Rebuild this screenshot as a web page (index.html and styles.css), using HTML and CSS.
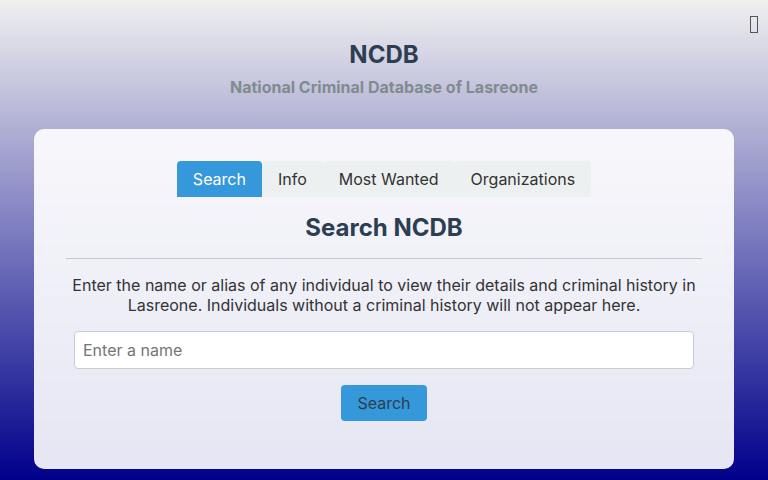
FILE: index.html
```html
<!DOCTYPE html>
<html lang="en">
<head>
<meta charset="utf-8">
<title>NCDB</title>
<link rel="stylesheet" href="styles.css">
</head>
<body>
<button class="theme-toggle" aria-label="Toggle theme"><span class="tofu"></span></button>
<header class="header">
  <h1 class="title">NCDB</h1>
  <p class="subtitle">National Criminal Database of Lasreone</p>
</header>
<main class="card">
  <nav class="tabs">
    <button class="tab tab-active">Search</button>
    <button class="tab">Info</button>
    <button class="tab">Most Wanted</button>
    <button class="tab">Organizations</button>
  </nav>
  <h2 class="heading">Search NCDB</h2>
  <hr class="divider">
  <p class="intro">Enter the name or alias of any individual to view their details and criminal history in Lasreone. Individuals without a criminal history will not appear here.</p>
  <div class="search-row">
    <input class="search-input" type="text" placeholder="Enter a name">
  </div>
  <div class="button-row">
    <button class="search-button">Search</button>
  </div>
</main>
</body>
</html>
```

FILE: styles.css
```css
* { box-sizing: border-box; }
html, body { height: 100%; }
body {
  margin: 0;
  font-family: Inter, "Noto Sans", sans-serif;
  background: linear-gradient(to bottom, #f0f0f0, #00008b);
  color: #333;
  overflow: hidden;
}
.theme-toggle {
  position: absolute;
  top: 14px;
  right: 8px;
  background: none;
  border: none;
  padding: 2px 2px;
  cursor: pointer;
}
.tofu {
  display: block;
  width: 8px;
  height: 17px;
  border: 1.5px solid #555;
}
.header {
  padding-top: 40px;
  text-align: center;
}
.title {
  margin: 0;
  font-size: 24px;
  line-height: 30px;
  font-weight: 700;
  color: #2c3e50;
}
.subtitle {
  margin: 7px 0 0;
  font-size: 16px;
  line-height: 20px;
  font-weight: 700;
  color: #7f8c8d;
}
.card {
  width: 700px;
  margin: 32px auto 0;
  padding: 32px 32px 48px;
  background: rgba(255, 255, 255, 0.9);
  border-radius: 10px;
}
.tabs {
  display: flex;
  justify-content: center;
}
.tab {
  height: 36px;
  padding: 0 16px;
  border: none;
  border-radius: 4px 4px 0 0;
  background: #ecf0f1;
  color: #333;
  font-family: inherit;
  font-size: 16px;
}
.tab-active {
  background: #3498db;
  color: #fff;
}
.heading {
  margin: 16px 0 0;
  font-size: 24px;
  line-height: 30px;
  font-weight: 700;
  text-align: center;
  color: #2c3e50;
}
.divider {
  margin: 15px 0 0;
  border: none;
  border-top: 1px solid #c8c8cc;
}
.intro {
  margin: 16px 0 0;
  font-size: 16px;
  line-height: 20px;
  text-align: center;
  color: #333;
}
.search-row {
  margin-top: 16px;
  padding: 0 8px;
}
.search-input {
  display: block;
  width: 100%;
  height: 38px;
  padding: 0 8px;
  border: 1px solid #ccc;
  border-radius: 4px;
  background: #fff;
  font-family: inherit;
  font-size: 16px;
  color: #333;
}
.search-input::placeholder { color: #757575; }
.button-row {
  margin-top: 16px;
  display: flex;
  justify-content: center;
}
.search-button {
  height: 36px;
  padding: 0 16px;
  border: none;
  border-radius: 4px;
  background: #3498db;
  color: #2c3e50;
  font-family: inherit;
  font-size: 16px;
}
```
